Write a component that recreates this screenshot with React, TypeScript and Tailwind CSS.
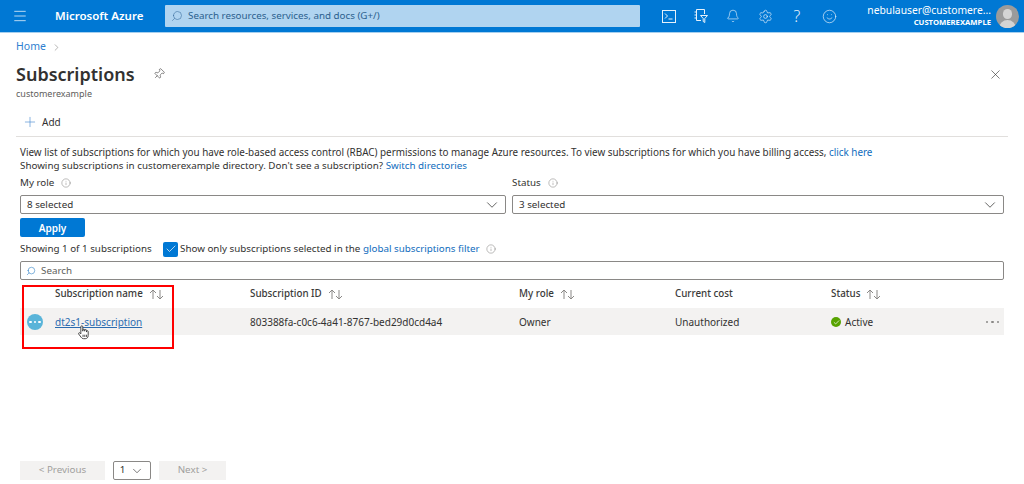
import React from "react";
import { ChevronDown, ChevronRight, Info, Pin, Plus, Search, X, Menu, Bell, Settings, Smile, Check } from "lucide-react";

const SortArrows = () => (
  <svg width="15" height="11" viewBox="0 0 15 11" fill="none" stroke="#8a8886" strokeWidth="1" className="shrink-0">
    <path d="M4 10V1M1 4l3-3 3 3" />
    <path d="M11 1v9M8 7l3 3 3-3" />
  </svg>
);

const TerminalIcon = () => (
  <svg width="14" height="13" viewBox="0 0 14 13" fill="none" stroke="#e6f1fa" strokeWidth="1">
    <rect x="0.5" y="0.5" width="13" height="12" />
    <path d="M3 3.500l2.500 2.500L3 8.500M6.500 9h4" />
  </svg>
);

const DirectoryIcon = () => (
  <svg width="14" height="14" viewBox="0 0 14 14" fill="none" stroke="#e6f1fa" strokeWidth="1">
    <path d="M2.500 11.500V.5h8V5M.5 3h2M.5 6h2M.5 9h2M2.500 11.500H7" />
    <path d="M6.500 6.500h7l-2.700 3v4l-1.600-1v-3z" />
  </svg>
);

const HandCursor = () => (
  <svg width="13" height="15" viewBox="0 0 13 17" fill="#fff" stroke="#333" strokeWidth="1" strokeLinejoin="round">
    <path d="M3.500 10V2a1.100 1.100 0 0 1 2.200 0v5l.1-1.200a1 1 0 0 1 2 0V7l.1-.8a1 1 0 0 1 2 0V8l.1-.6a.9.9 0 0 1 1.800 0V12c0 2-1.300 3.500-3.300 3.500H6.500c-1.200 0-2-.6-2.700-1.600L1.100 10.300c-.7-1.100.7-2.100 1.500-1.200z" />
    <path d="M6 11v2.500M8 11v2.500M10 11v2.500" fill="none" />
  </svg>
);

const Avatar = () => (
  <div className="relative w-[23px] h-[23px] rounded-full bg-[#9b9b9b] overflow-hidden">
    <div className="absolute left-[7px] top-[4px] w-[9px] h-[10px] rounded-full bg-[#d4d4d4]" />
    <div className="absolute left-[3px] top-[15px] w-[17px] h-[10px] rounded-t-full bg-[#d4d4d4]" />
  </div>
);

const SelectBox = ({ label }: { label: string }) => (
  <div className="flex items-center justify-between h-[19px] border border-[#8a8886] rounded-[2px] pl-[6px] pr-[4px]">
    <span className="pt-px">{label}</span>
    <ChevronDown size={18} strokeWidth={1} className="text-[#323130]" />
  </div>
);

const FieldLabel = ({ label }: { label: string }) => (
  <div className="flex items-center gap-[7px] h-[16px] mb-[4px]">
    <span>{label}</span>
    <Info size={10} strokeWidth={1} className="text-[#605e5c]" />
  </div>
);

export default function App() {
  return (
    <div className="w-[1024px] h-[484px] overflow-hidden bg-white text-[#323130] text-[9.8px] flex flex-col font-['Noto_Sans','Open_Sans',sans-serif]">
      <header className="h-[33px] shrink-0 bg-[#0078d4] border-b border-[#a6cfee] flex items-center text-white">
        <Menu size={16} strokeWidth={1.2} className="ml-[12px] text-[#e6f1fa]" />
        <span className="ml-[27px] w-[110px] text-[11.500px] font-semibold">Microsoft Azure</span>
        <div className="flex items-center w-[475px] h-[22px] bg-[#b0d4f0] rounded-[1px] text-[#2b5f8e]">
          <Search size={12} strokeWidth={1.2} className="ml-[6px] -scale-x-100 text-[#3b6f9e]" />
          <span className="ml-[5px]">Search resources, services, and docs (G+/)</span>
        </div>
        <div className="ml-[13px] grid grid-cols-[repeat(6,32px)] place-items-center text-[#e6f1fa]">
          <TerminalIcon />
          <DirectoryIcon />
          <Bell size={14} strokeWidth={1.1} />
          <Settings size={15} strokeWidth={1.1} />
          <span className="text-[16px] leading-none font-light">?</span>
          <Smile size={15} strokeWidth={1.1} />
        </div>
        <div className="ml-auto flex flex-col items-end leading-[12px] mr-[5px]">
          <span className="text-[10.300px]">nebulauser@customere...</span>
          <span className="text-[7.700px] font-bold">CUSTOMEREXAMPLE</span>
        </div>
        <div className="mr-[5px]">
          <Avatar />
        </div>
      </header>

      <main className="relative flex-1 flex flex-col pl-[20px] pr-[20px]">
        <div className="flex items-center h-[14px] mt-[7px] -ml-[4px] gap-[5px]">
          <span className="text-[#2f7fd0] text-[10.500px]">Home</span>
          <ChevronRight size={11} strokeWidth={1} className="text-[#605e5c]" />
        </div>
        <div className="flex items-center justify-between h-[28px] mt-[6px] -ml-[4px]">
          <div className="flex items-center">
            <h1 className="text-[18px] font-semibold leading-[28px] text-[#323130]">Subscriptions</h1>
            <Pin size={12} strokeWidth={1.1} className="ml-[18px] rotate-45 text-[#323130]" />
          </div>
          <X size={15} strokeWidth={1} className="mr-[1.500px] text-[#323130]" />
        </div>
        <div className="-ml-[4px] h-[12px] leading-[12px] text-[#605e5c] text-[9px]">customerexample</div>
        <div className="flex items-center h-[16px] mt-[14px] gap-[4px] text-[10px]">
          <Plus size={16} strokeWidth={1} className="ml-[2px] text-[#4f90d2]" />
          <span>Add</span>
        </div>
        <div className="mt-[6px] -ml-[4px] -mr-[4px] h-px bg-[#e1dfdd]" />

        <p className="mt-[9px] leading-[13px] whitespace-nowrap text-[9.900px]">
          View list of subscriptions for which you have role-based access control (RBAC) permissions to manage Azure resources. To view subscriptions for which you have billing access,{" "}
          <span className="text-[#0f6cbd]">click here</span>
        </p>
        <p className="leading-[13px] whitespace-nowrap">
          Showing subscriptions in customerexample directory. Don't see a subscription? <span className="text-[#0f6cbd]">Switch directories</span>
        </p>

        <div className="grid grid-cols-[486px_492px] gap-x-[6px] mt-[3px]">
          <div>
            <FieldLabel label="My role" />
            <SelectBox label="8 selected" />
          </div>
          <div>
            <FieldLabel label="Status" />
            <SelectBox label="3 selected" />
          </div>
        </div>

        <button className="mt-[4px] w-[65px] h-[19px] bg-[#0078d4] rounded-[2px] text-white font-semibold text-[10px] leading-none">Apply</button>

        <div className="flex items-center h-[14px] mt-[5px]">
          <span className="w-[143px] pt-px">Showing 1 of 1 subscriptions</span>
          <span className="flex items-center justify-center w-[15px] h-[15px] bg-[#0078d4] rounded-[2px] mr-[2px]">
            <Check size={12} strokeWidth={1.4} className="text-white" />
          </span>
          <span className="pt-px">Show only subscriptions selected in the&nbsp;</span>
          <span className="pt-px text-[#0f6cbd]">global subscriptions filter</span>
          <Info size={10} strokeWidth={1} className="ml-[6px] text-[#605e5c]" />
        </div>

        <div className="flex items-center h-[19px] mt-[5px] w-[984px] border border-[#8a8886] rounded-[2px] text-[#605e5c]">
          <Search size={10} strokeWidth={1.2} className="ml-[5px] -scale-x-100 text-[#0f6cbd]" />
          <span className="ml-[5px] pt-px">Search</span>
        </div>

        <div className="grid grid-cols-[35px_195px_269px_156px_156px_173px] w-[984px] items-center h-[28px] pt-px font-medium text-[#3b3a39]">
          <span />
          <span className="flex items-center gap-[6px]">Subscription name <SortArrows /></span>
          <span className="flex items-center gap-[6px]">Subscription ID <SortArrows /></span>
          <span className="flex items-center gap-[6px]">My role <SortArrows /></span>
          <span>Current cost</span>
          <span className="flex items-center gap-[6px]">Status <SortArrows /></span>
        </div>
        <div className="grid grid-cols-[35px_195px_269px_156px_156px_173px] w-[984px] items-center h-[27px] pt-px bg-[#f3f2f1] text-[10px]">
          <span className="ml-[7px] flex items-center justify-center gap-[2px] w-[16px] h-[16px] rounded-full bg-[#59b4d9]">
            <i className="w-[2.500px] h-[2.500px] rounded-full bg-white" />
            <i className="w-[2.500px] h-[2.500px] rounded-full bg-white" />
            <i className="w-[2.500px] h-[2.500px] rounded-full bg-white" />
          </span>
          <span className="text-[#2b6cb0] underline">dt2s1-subscription</span>
          <span>803388fa-c0c6-4a41-8767-bed29d0cd4a4</span>
          <span>Owner</span>
          <span>Unauthorized</span>
          <span className="flex items-center justify-between pr-[5px]">
            <span className="flex items-center gap-[4px]">
              <span className="flex items-center justify-center w-[10px] h-[10px] rounded-full bg-[#57a300]">
                <Check size={7} strokeWidth={2.5} className="text-white" />
              </span>
              Active
            </span>
            <span className="flex gap-[3px]">
              <i className="w-[2.500px] h-[2.500px] rounded-full bg-[#8a8886]" />
              <i className="w-[2.500px] h-[2.500px] rounded-full bg-[#8a8886]" />
              <i className="w-[2.500px] h-[2.500px] rounded-full bg-[#8a8886]" />
            </span>
          </span>
        </div>

        <div className="mt-auto mb-[4px] flex items-center h-[19px]">
          <span className="flex items-center justify-center w-[85px] h-full bg-[#f3f2f1] text-[#a19f9d]">&lt; Previous</span>
          <span className="ml-[8px] flex items-center justify-center gap-[5px] w-[38px] h-full border border-[#8a8886] rounded-[2px]">
            1 <ChevronDown size={14} strokeWidth={1.1} />
          </span>
          <span className="ml-[8px] flex items-center justify-center w-[67px] h-full bg-[#f3f2f1] text-[#a19f9d]">Next &gt;</span>
        </div>

        <div className="absolute left-[22px] top-[252px] w-[152px] h-[64px] border-2 border-[#ff0000]" />
        <div className="absolute left-[77px] top-[292px]">
          <HandCursor />
        </div>
      </main>
    </div>
  );
}
